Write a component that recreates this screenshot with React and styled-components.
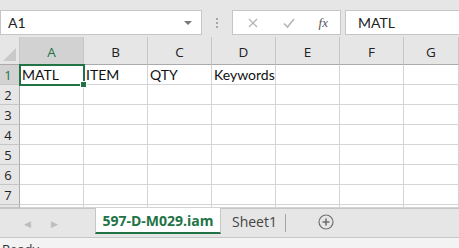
import React from "react";
import styled, { createGlobalStyle } from "styled-components";

const GlobalStyle = createGlobalStyle`
  html, body {
    margin: 0;
    padding: 0;
    background: #e6e6e6;
  }
  body {
    font-family: "Lato", "Open Sans", sans-serif;
    overflow: hidden;
  }
`;

const Window = styled.div`
  width: 459px;
  height: 248px;
  display: flex;
  flex-direction: column;
  background: #e6e6e6;
  overflow: hidden;
  & > * {
    flex-shrink: 0;
  }
`;

const FormulaRow = styled.div`
  height: 37px;
  box-sizing: border-box;
  padding-top: 10px;
  display: flex;
  align-items: flex-start;
`;

const Box = styled.div`
  height: 25px;
  box-sizing: border-box;
  background: #fff;
  border: 1px solid #c6c6c6;
  display: flex;
  align-items: center;
  font-size: 14px;
  color: #222;
`;

const NameBox = styled(Box)`
  width: 202px;
  padding: 0 7px;
  justify-content: space-between;
`;

const Caret = styled.span`
  width: 0;
  height: 0;
  border-left: 4px solid transparent;
  border-right: 4px solid transparent;
  border-top: 4px solid #777;
  margin-right: 2px;
`;

const Grip = styled.div`
  width: 30px;
  height: 25px;
  display: flex;
  flex-direction: column;
  align-items: center;
  justify-content: center;
  gap: 2px;
  span {
    width: 2px;
    height: 2px;
    background: #a6a6a6;
  }
`;

const FxBox = styled(Box)`
  width: 109px;
  padding: 0 12px 0 14px;
  justify-content: space-between;
`;

const Fx = styled.span`
  font-family: "Liberation Serif", serif;
  font-style: italic;
  font-size: 13px;
  color: #555;
`;

const Formula = styled(Box)`
  flex: 1;
  margin-left: 4px;
  padding-left: 12px;
  font-size: 14px;
  border-right: none;
`;

const Sheet = styled.div`
  display: grid;
  grid-template-columns: 20px repeat(6, 64px) 1fr;
  grid-template-rows: 28px repeat(7, 20px) 1fr;
  background: #fff;
  height: 171px;
  overflow: hidden;
  font-size: 14px;
`;

const Corner = styled.div`
  background: #e6e6e6;
  border-right: 1px solid #c6c6c6;
  border-bottom: 1px solid #ababab;
  position: relative;
  &::after {
    content: "";
    position: absolute;
    right: 3px;
    bottom: 3px;
    border-left: 13px solid transparent;
    border-bottom: 13px solid #c9c9c9;
  }
`;

const ColHead = styled.div`
  background: ${(p) => (p.$active ? "#d2d2d2" : "#e6e6e6")};
  color: ${(p) => (p.$active ? "#217346" : "#222")};
  border-right: 1px solid #c6c6c6;
  border-bottom: 1px solid ${(p) => (p.$active ? "#217346" : "#ababab")};
  display: flex;
  align-items: center;
  justify-content: center;
  padding-top: 2px;
  box-sizing: border-box;
  font-family: "Open Sans", sans-serif;
  font-size: 13.5px;
`;

const RowHead = styled.div`
  background: ${(p) => (p.$active ? "#d2d2d2" : "#e6e6e6")};
  color: ${(p) => (p.$active ? "#217346" : "#222")};
  border-right: 1px solid #ababab;
  border-bottom: 1px solid #c6c6c6;
  display: flex;
  align-items: center;
  justify-content: center;
  padding-right: 3px;
  font-family: "Open Sans", sans-serif;
  font-size: 13px;
`;

const Cell = styled.div`
  border-right: 1px solid #d4d4d4;
  border-bottom: 1px solid #d4d4d4;
  display: flex;
  align-items: center;
  padding-left: 2px;
  color: #111;
  white-space: nowrap;
  position: relative;
  box-sizing: border-box;
  ${(p) =>
    p.$selected &&
    `
    outline: 2px solid #217346;
    outline-offset: -1px;
    z-index: 1;
    &::after {
      content: "";
      position: absolute;
      right: -4px;
      bottom: -4px;
      width: 5px;
      height: 5px;
      background: #217346;
      border: 1px solid #fff;
    }
  `}
`;

const TabBar = styled.div`
  height: 28px;
  border-top: 1px solid #c6c6c6;
  background: #e6e6e6;
  display: flex;
  align-items: stretch;
`;

const Nav = styled.div`
  width: 95px;
  display: flex;
  align-items: center;
  gap: 20px;
  padding-left: 24px;
  box-sizing: border-box;
  color: #bdbdbd;
  font-size: 9px;
`;

const Tab = styled.div`
  display: flex;
  align-items: center;
  justify-content: center;
  box-sizing: border-box;
  font-family: "Open Sans", sans-serif;
  font-size: 14px;
  margin-top: -1px;
  ${(p) =>
    p.$active
      ? `
    width: 126px;
    background: #fff;
    color: #217346;
    font-weight: 700;
    border-left: 1px solid #c6c6c6;
    border-right: 1px solid #c6c6c6;
    border-bottom: 2px solid #217346;
    margin-bottom: 3px;
  `
      : `
    width: 64px;
    padding-left: 3px;
    color: #444;
    padding-bottom: 3px;
  `}
`;

const Divider = styled.div`
  width: 1px;
  background: #a6a6a6;
  margin: 5px 0;
`;

const AddSheet = styled.div`
  margin-left: 32px;
  display: flex;
  align-items: center;
  padding-bottom: 3px;
`;

const StatusBar = styled.div`
  height: 11px;
  background: #f3f3f3;
  border-top: 1px solid #c6c6c6;
  font-family: "Open Sans", sans-serif;
  font-size: 13px;
  color: #333;
  padding: 1px 0 0 2px;
  line-height: 20px;
  overflow: hidden;
`;

const cols = ["A", "B", "C", "D", "E", "F", "G"];
const row1 = ["MATL", "ITEM", "QTY", "Keywords", "", "", ""];

export default function App() {
  const rows = [1, 2, 3, 4, 5, 6, 7];
  return (
    <Window>
      <GlobalStyle />
      <FormulaRow>
        <NameBox>
          <span>A1</span>
          <Caret />
        </NameBox>
        <Grip>
          <span />
          <span />
          <span />
        </Grip>
        <FxBox>
          <svg width="12" height="12" viewBox="0 0 12 12">
            <path d="M2 2 L10 10 M10 2 L2 10" stroke="#b5b5b5" strokeWidth="1.3" fill="none" />
          </svg>
          <svg width="14" height="12" viewBox="0 0 14 12">
            <path d="M2 6.5 L5.5 10 L12 2" stroke="#b5b5b5" strokeWidth="1.6" fill="none" />
          </svg>
          <Fx>fx</Fx>
        </FxBox>
        <Formula>MATL</Formula>
      </FormulaRow>
      <Sheet>
        <Corner />
        {cols.map((c, i) => (
          <ColHead key={c} $active={i === 0}>
            {c}
          </ColHead>
        ))}
        {rows.map((r) => (
          <React.Fragment key={r}>
            <RowHead $active={r === 1}>{r}</RowHead>
            {cols.map((c, i) => (
              <Cell key={c} $selected={r === 1 && i === 0}>
                {r === 1 ? row1[i] : ""}
              </Cell>
            ))}
          </React.Fragment>
        ))}
        <RowHead />
        {cols.map((c) => (
          <Cell key={c} />
        ))}
      </Sheet>
      <TabBar>
        <Nav>
          <span>◀</span>
          <span>▶</span>
        </Nav>
        <Tab $active>597-D-M029.iam</Tab>
        <Tab>Sheet1</Tab>
        <Divider />
        <AddSheet>
          <svg width="16" height="16" viewBox="0 0 16 16">
            <circle cx="8" cy="8" r="7" stroke="#6f6f6f" strokeWidth="1.2" fill="none" />
            <path d="M8 4.5 V11.5 M4.5 8 H11.5" stroke="#6f6f6f" strokeWidth="1.6" />
          </svg>
        </AddSheet>
      </TabBar>
      <StatusBar>Ready</StatusBar>
    </Window>
  );
}
